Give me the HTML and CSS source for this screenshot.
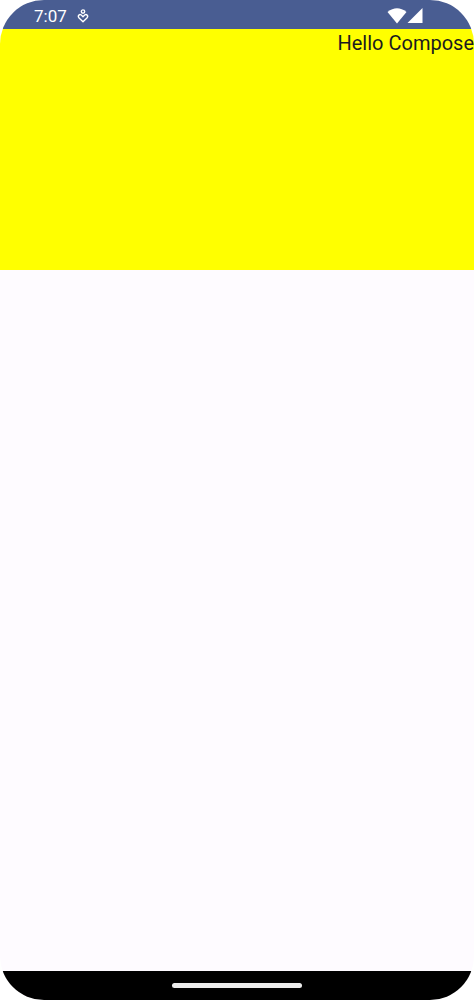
FILE: index.html
```html
<!DOCTYPE html>
<html lang="en">
<head>
<meta charset="utf-8">
<meta name="viewport" content="width=device-width, initial-scale=1">
<title>Hello Compose</title>
<link rel="stylesheet" href="styles.css">
</head>
<body>
<div class="screen">
  <header class="status-bar">
    <div class="status-group">
      <time class="clock">7:07</time>
      <svg class="notification-icon" viewBox="0 0 12 14" aria-hidden="true">
        <circle cx="6" cy="2.6" r="1.7"/>
        <path d="M6 12.8 2.1 9C.2 6.9 2.4 4.6 4.3 6L6 7.7 7.7 6C9.6 4.6 11.8 6.9 9.9 9Z"/>
      </svg>
    </div>
    <div class="status-group signals">
      <svg class="wifi-icon" viewBox="0 0 20 16" aria-hidden="true">
        <path d="M10 15.5.5 4Q10-3.5 19.5 4Z"/>
      </svg>
      <svg class="cell-icon" viewBox="0 0 16 16" aria-hidden="true">
        <path d="M15.5 0V15H.5Z"/>
      </svg>
    </div>
  </header>
  <main class="content">
    <div class="panel"><p class="greeting">Hello Compose</p></div>
  </main>
  <footer class="nav-bar"><div class="nav-handle"></div></footer>
</div>
</body>
</html>
```
FILE: styles.css
```css
* { box-sizing: border-box; }
body {
  margin: 0;
  background: #fff;
  font-family: Roboto, sans-serif;
}
.screen {
  display: flex;
  flex-direction: column;
  min-height: 100vh;
  border-radius: 44px;
  overflow: hidden;
  background: #fefbff;
}
.status-bar {
  display: flex;
  align-items: center;
  justify-content: space-between;
  height: 29px;
  padding: 2px 51px 0 34px;
  background: #495d92;
  color: #fff;
}
.status-group {
  display: flex;
  align-items: center;
  gap: 10px;
}
.signals { gap: 0; }
.clock {
  font-size: 17px;
  line-height: 24px;
}
.notification-icon {
  width: 12px;
  height: 14px;
  fill: none;
  stroke: #fff;
  stroke-width: 1.4;
  stroke-linejoin: round;
}
.wifi-icon {
  width: 20px;
  height: 16px;
  fill: #fff;
}
.cell-icon {
  width: 16px;
  height: 16px;
  fill: #fff;
}
.content { flex: 1; }
.panel {
  height: 241px;
  background: #ff0;
}
.greeting {
  margin: 0;
  font-size: 20px;
  line-height: 28px;
  text-align: right;
  color: #1b1b1f;
}
.nav-bar {
  display: flex;
  align-items: center;
  justify-content: center;
  height: 29px;
  background: #000;
}
.nav-handle {
  width: 130px;
  height: 5px;
  border-radius: 3px;
  background: #ececec;
}
```
